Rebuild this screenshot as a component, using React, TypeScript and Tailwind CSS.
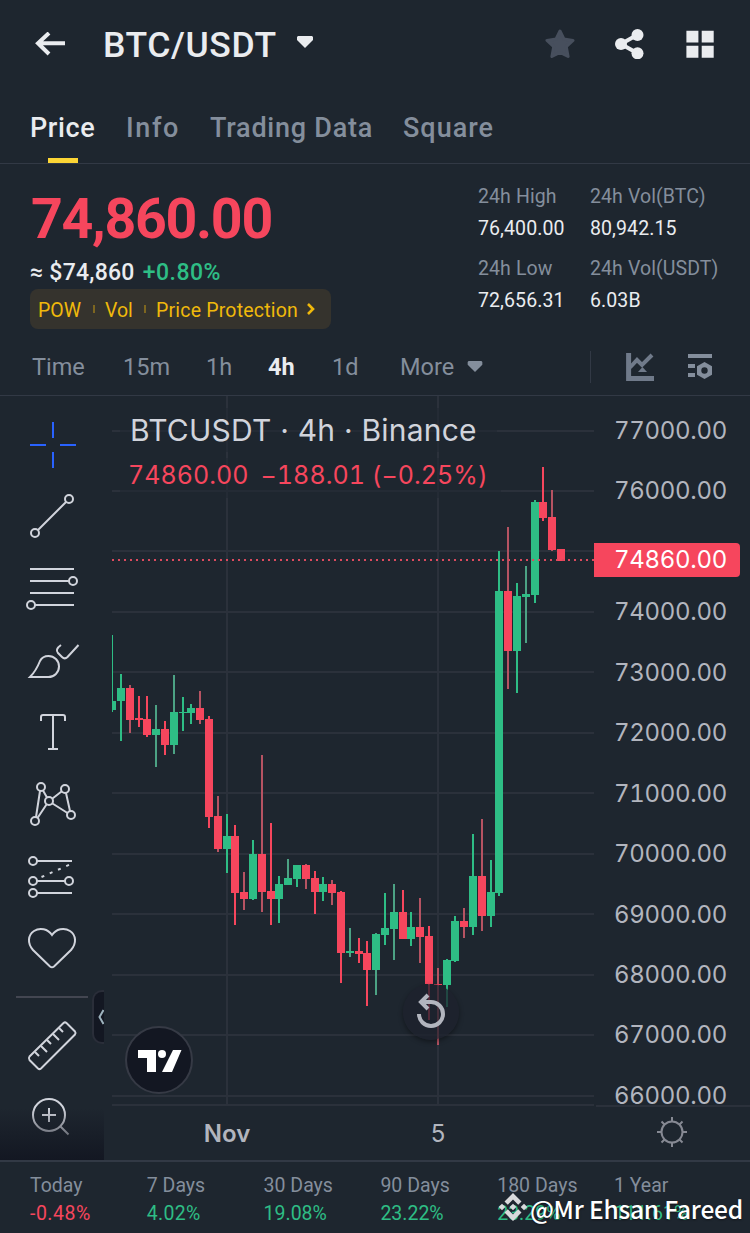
import React from 'react';

type Candle = [x: number, open: number, close: number, high: number, low: number, up: 0 | 1];

// x centre, body top, body bottom, wick top, wick bottom, rising
const candles: Candle[] = [
  [112, 701, 710, 635, 712, 1],
  [121, 688, 701, 674, 741, 1],
  [130, 688, 720, 685, 733, 0],
  [139, 718, 720, 696, 727, 0],
  [147, 719, 735, 696, 737, 0],
  [156, 729, 735, 705, 767, 1],
  [165, 729, 745, 721, 755, 0],
  [174, 712, 745, 675, 754, 1],
  [183, 712, 713, 697, 731, 1],
  [191, 708, 713, 704, 724, 1],
  [200, 708, 720, 691, 724, 0],
  [209, 719, 817, 716, 828, 0],
  [218, 816, 849, 796, 852, 0],
  [227, 836, 849, 814, 873, 1],
  [235, 836, 893, 825, 925, 0],
  [244, 892, 899, 872, 910, 0],
  [253, 854, 899, 840, 900, 1],
  [262, 854, 892, 755, 912, 0],
  [271, 891, 899, 823, 925, 0],
  [279, 884, 899, 876, 923, 1],
  [288, 878, 885, 859, 885, 1],
  [297, 865, 879, 865, 887, 1],
  [306, 865, 879, 864, 889, 0],
  [315, 878, 892, 871, 914, 0],
  [323, 884, 892, 877, 901, 1],
  [332, 884, 893, 880, 905, 0],
  [341, 892, 953, 891, 983, 0],
  [350, 951, 953, 928, 957, 1],
  [359, 951, 954, 938, 963, 0],
  [367, 953, 970, 941, 1006, 0],
  [376, 934, 970, 933, 995, 1],
  [385, 928, 935, 893, 945, 1],
  [394, 912, 929, 884, 960, 1],
  [403, 912, 939, 890, 939, 0],
  [411, 927, 939, 912, 946, 1],
  [420, 927, 937, 898, 963, 0],
  [429, 936, 984, 926, 1020, 0],
  [438, 984, 985, 968, 1045, 0],
  [447, 960, 985, 959, 1007, 1],
  [455, 921, 961, 916, 962, 1],
  [464, 921, 927, 908, 938, 0],
  [473, 876, 927, 834, 935, 1],
  [482, 876, 916, 819, 931, 0],
  [491, 892, 916, 860, 927, 1],
  [499, 591, 893, 551, 896, 1],
  [508, 591, 651, 527, 689, 0],
  [517, 596, 651, 583, 693, 1],
  [526, 594, 597, 566, 643, 1],
  [535, 502, 595, 500, 603, 1],
  [543, 502, 518, 467, 521, 0],
  [552, 517, 550, 490, 551, 0],
  [561, 549, 561, 549, 561, 0],
];

const gridY = [431, 491, 551, 612, 672, 733, 793, 854, 914, 975, 1035, 1096];

const priceLabels = [
  '77000.00', '76000.00', '', '74000.00', '73000.00', '72000.00',
  '71000.00', '70000.00', '69000.00', '68000.00', '67000.00', '66000.00',
];

const Header: React.FC = () => (
  <header className="flex h-[88px] items-center pl-[35px] pr-9 text-[#eaecef]">
    <svg className="h-6 w-[30px]" viewBox="0 0 30 24" fill="none" stroke="currentColor" strokeWidth="4">
      <path d="M30 11.3H4M14 1L3 11.3 14 22" />
    </svg>
    <h1 className="ml-[38px] w-[194px] pt-0.5 text-[35.5px] leading-[40px] font-medium tracking-[0.6px]">BTC/USDT</h1>
    <svg className="-mt-1 h-3 w-4" viewBox="0 0 16 12" fill="currentColor">
      <path d="M1 0h14l1 1v3L8 12 0 4V1z" />
    </svg>
    <div className="ml-auto flex items-center">
      <svg className="h-[30px] w-[30px] text-[#474f5d]" viewBox="0 0 30 30" fill="currentColor" stroke="currentColor" strokeWidth="3" strokeLinejoin="round">
        <path d="M15 2l3.9 8 9.1 1.400-6.700 6.300 1.800 9.800L15 23.400l-8.100 4.100 1.800-9.800L2 11.400 11.100 10z" />
      </svg>
      <svg className="ml-10 h-[30px] w-[30px]" viewBox="0 0 30 30" fill="currentColor">
        <path d="M22 6L6 15l16 9" fill="none" stroke="currentColor" strokeWidth="4" />
        <circle cx="6" cy="15" r="6" />
        <circle cx="22.5" cy="6" r="6" />
        <circle cx="22.5" cy="24.3" r="6" />
      </svg>
      <svg className="ml-[41px] h-7 w-7" viewBox="0 0 28 28" fill="currentColor">
        <path d="M.4.7h12v11.7H.4zM15.7.7h12v11.7h-12zM.4 15.7h12v12H.4zM15.7 15.7h12v12h-12z" />
      </svg>
    </div>
  </header>
);

const Tabs: React.FC = () => (
  <nav className="flex h-[76px] border-b border-[#323945] pl-[30px] text-[27px] font-medium text-[#848e9c]">
    <div className="flex w-24 flex-col">
      <span className="h-[70px] pt-5 leading-[40px] tracking-[0.6px] text-[#eaecef]">Price</span>
      <span className="ml-[18px] h-[5px] w-[30px] bg-[#fcd535]" />
    </div>
    <span className="w-[84px] pt-5 leading-[40px] tracking-[1.6px]">Info</span>
    <span className="w-[193px] pt-5 leading-[40px] tracking-[0.75px]">Trading Data</span>
    <span className="pt-5 leading-[40px] tracking-[1px]">Square</span>
  </nav>
);

const Stat: React.FC<{ label: string; value: string }> = ({ label, value }) => (
  <div className="text-[19.5px] leading-8 tracking-[0.1px]">
    <div className="text-[#848e9c]">{label}</div>
    <div className="text-[#eaecef]">{value}</div>
  </div>
);

const Ticker: React.FC = () => (
  <section className="flex h-[174px]">
    <div className="w-[478px] pl-[30px]">
      <div className="mt-[27px] ml-px h-[58px] text-[55.5px] leading-[58px] font-bold tracking-[-1.3px] text-[#f6465d]">74,860.00</div>
      <div className="mt-[9px] flex h-7 items-center gap-2 pt-0.5 text-[23px] font-medium">
        <span className="tracking-[0.25px] text-[#eaecef]">≈ $74,860</span>
        <span className="tracking-[0.5px] text-[#2ebd85]">+0.80%</span>
      </div>
      <div className="mt-[3px] flex h-10 w-[301px] items-center rounded-lg bg-[#35332d] pl-2 text-[19.5px] text-[#f0b90b]">
        <span className="w-[55px] pt-1">POW</span>
        <span className="mr-[10px] h-2 w-0.5 bg-[#7d6620]" />
        <span className="w-[39px] pt-1">Vol</span>
        <span className="mr-[10px] h-2 w-0.5 bg-[#7d6620]" />
        <span className="w-[151px] pt-1 tracking-[0.2px]">Price Protection</span>
        <svg className="h-3 w-2" viewBox="0 0 8 12" fill="none" stroke="currentColor" strokeWidth="2.6">
          <path d="M1 1l5 5-5 5" />
        </svg>
      </div>
    </div>
    <div className="grid grid-cols-[112px_auto] grid-rows-[72px_72px] pt-[17px]">
      <Stat label="24h High" value="76,400.00" />
      <Stat label="24h Vol(BTC)" value="80,942.15" />
      <Stat label="24h Low" value="72,656.31" />
      <Stat label="24h Vol(USDT)" value="6.03B" />
    </div>
  </section>
);

const Intervals: React.FC = () => (
  <section className="flex h-[58px] items-center border-b border-[#323945] pl-8 text-[23.5px] text-[#848e9c]">
    <span className="w-[91px] pt-0.5">Time</span>
    <span className="w-[83px] pt-0.5">15m</span>
    <span className="w-[62px] pt-0.5">1h</span>
    <span className="w-16 pt-0.5 font-bold text-[#eaecef]">4h</span>
    <span className="w-[68px] pt-0.5">1d</span>
    <span className="w-[67px] pt-0.5">More</span>
    <svg className="h-[11px] w-4" viewBox="0 0 16 12" fill="currentColor">
      <path d="M1 0h14l1 1v3L8 12 0 4V1z" />
    </svg>
    <span className="ml-[107px] h-8 w-px bg-[#323945]" />
    <svg className="ml-[35px] h-7 w-7 text-[#707a8a]" viewBox="0 0 28 28" fill="none" stroke="currentColor">
      <path d="M2.6 0v25.4H28" strokeWidth="5" />
      <path d="M4 14.5l7-7.5 5 5L26 2" strokeWidth="4" />
      <path d="M12 19l4.5-5 4.5 5z" fill="currentColor" stroke="none" />
    </svg>
    <svg className="ml-[34px] h-[27px] w-6" viewBox="0 0 24 27" fill="currentColor">
      <path d="M0 1h24v4H0zM0 11h7v4H0zM0 20h7v4H0z" />
      <path fillRule="evenodd" d="M16.5 9l7.5 4.3v8.4L16.5 26 9 21.700v-8.400zM16.500 14.300a3.200 3.200 0 1 0 0 6.400 3.200 3.200 0 1 0 0-6.400z" />
    </svg>
  </section>
);

const Tool: React.FC<{ children: React.ReactNode; className?: string }> = ({ children, className }) => (
  <svg
    className={className || 'h-[72px] w-[104px] shrink-0 text-[#d1d4dc]'}
    viewBox="0 0 104 72"
    fill="none"
    stroke="currentColor"
    strokeWidth="2"
  >
    {children}
  </svg>
);

const Toolbar: React.FC = () => (
  <aside className="relative flex w-[112px] flex-col pt-[13px]">
    <Tool className="h-[72px] w-[104px] shrink-0 text-[#2962ff]">
      <path d="M53 13v16M53 43v16M30 36h16M60 36h16" />
    </Tool>
    <Tool>
      <circle cx="69" cy="18" r="4" />
      <circle cx="35" cy="52" r="4" />
      <path d="M38 49l28-28" />
    </Tool>
    <Tool>
      <path d="M30 16h44M30 28h39M30 40h44M35 52h39" />
      <circle cx="73" cy="28" r="4" />
      <circle cx="31" cy="52" r="4" />
    </Tool>
    <Tool>
      <path d="M30 52c5-5 8-11 10-16 1.800-3.500 4.800-5 8.500-5a10.500 10.500 0 0 1 0 21z" />
      <path d="M61 20c-4.500 3-5 6-3 8l4 4c2 2 4 1.500 5.500 0l11-12" />
    </Tool>
    <Tool>
      <path d="M41 24v-4q0-2 2-2h20q2 0 2 2v4M53 18v34M48 52h10" />
    </Tool>
    <Tool>
      <circle cx="41" cy="18" r="4" />
      <circle cx="65" cy="20" r="4" />
      <circle cx="49" cy="32" r="4" />
      <circle cx="35" cy="52" r="4" />
      <circle cx="71" cy="46" r="4" />
      <path d="M40 22l-4 26M43 21.500l4 7M52.500 29.500l9-7M66 24l4 18M46.500 35.500L37.500 49M52.500 34.500l15 9.500" />
    </Tool>
    <Tool>
      <circle cx="33" cy="20" r="4" />
      <circle cx="33" cy="40" r="4" />
      <circle cx="69" cy="40" r="4" />
      <circle cx="33" cy="52" r="4" />
      <path d="M37 20h35M37 40h28M37 52h35" />
      <path d="M41.500 36L70 23.500" strokeDasharray="3 6" />
    </Tool>
    <Tool>
      <path d="M52 22c-4-6-12-8-18-4-6 4-7 12-1 19l17 16.500q2 1.500 4 0l17-16.500c6-7 5-15-1-19-6-4-14-2-18 4z" />
    </Tool>
    <div className="mb-3 ml-4 mt-[11px] h-0.5 w-[72px] bg-[#434651]" />
    <Tool>
      <path d="M29.500 46.500L63.500 13q1.500-1.200 3 0l8.500 8.500q1.200 1.500 0 3L41 58.500q-1.500 1.200-3 0l-8.500-8.500q-1.300-1.700 0-3.500z" />
      <path d="M35 42l4 4M41 36l6 6M47 30l4 4M53 24l6 6M59 18l4 4" />
    </Tool>
    <Tool>
      <circle cx="49" cy="33" r="16" />
      <path d="M49 26v14M42 33h14M60.500 44.500l8 8" />
    </Tool>
    <div className="absolute bottom-0 left-0 h-[52px] w-[104px] bg-gradient-to-b from-transparent to-[#131722]" />
    <div className="absolute left-[92px] top-[594px] flex h-[54px] w-3 items-center rounded-l-[10px] border-2 border-r-0 border-[#2a2e39] bg-[#131722] pl-1">
      <svg className="h-4 w-1.5" viewBox="0 0 6 16" fill="none" stroke="#9db2bd" strokeWidth="2">
        <path d="M5.500 1L1.500 8l4 7" />
      </svg>
    </div>
  </aside>
);

const Chart: React.FC = () => (
  <div className="relative h-[764px] w-[482px] shrink-0">
    <svg className="block h-[764px] w-[482px]" viewBox="112 396 482 764">
      <g fill="#2b313b">
        {gridY.map((y) => (
          <rect key={y} x="112" y={y - 1} width="482" height="2" />
        ))}
        <rect x="226" y="396" width="2" height="709" />
        <rect x="437" y="396" width="2" height="709" />
        <rect x="112" y="1104" width="482" height="2" />
      </g>
      {candles.map(([x, top, bottom, high, low, up], i) => {
        const soft = i % 5 === 0 || i % 5 === 2;
        const body = up ? '#2ebd85' : '#f6465d';
        const wick = soft && i > 0 ? (up ? '#4ca284' : '#b65362') : body;
        return (
          <g key={x}>
            <rect x={x - 1} y={high} width="2" height={low - high} fill={wick} />
            <rect x={x - 4} y={top} width="8" height={bottom - top} fill={body} />
          </g>
        );
      })}
      <path d="M112 560h482" stroke="#dc4a5e" strokeWidth="2" strokeDasharray="2 4" />
    </svg>

    {/* Legend */}
    <div className="absolute left-2 top-3 text-[#d1d4dc]">
      <div className="h-11 w-[377px] bg-[#1e262f]/50 pl-[10px] text-[30px] leading-[44px] tracking-[0.22px] whitespace-nowrap">
        BTCUSDT · 4h · Binance
      </div>
      <div className="mt-1.5 flex h-10 w-[381px] gap-[12px] bg-[#1e262f]/50 pl-2 text-[25px] leading-[34px] tracking-[0.05px] whitespace-nowrap text-[#f6465d] tabular-nums">
        <span>74860.00</span>
        <span>−188.01 (−0.25%)</span>
      </div>
    </div>

    <div className="absolute left-[13px] top-[630px] h-[68px] w-[68px] rounded-full border-2 border-[#363a45] bg-[#131722]">
      <svg className="h-16 w-16" viewBox="127 1028 64 64" fill="#fff">
        <path d="M138 1050h18v22h-9v-14h-9zM173 1050h8.500l-9.500 22h-10z" />
        <circle cx="162" cy="1054" r="4" />
      </svg>
    </div>

    <div className="absolute left-[291px] top-[588px] h-14 w-14 rounded-full bg-[#1e222d]/75 shadow-[0_2px_5px_rgba(0,0,0,0.4)]">
      <svg className="h-14 w-14" viewBox="403 984 56 56" fill="none" stroke="#b2b5be" strokeWidth="4">
        <path d="M419 1014a12 12 0 1 0 12-12h-8M428 995l-7 7 7 7" />
      </svg>
    </div>

    {/* Time axis */}
    <span className="absolute bottom-3 left-[115px] w-0 text-[24px] leading-7 font-semibold text-[#b2b5be]">
      <span className="flex w-0 justify-center">Nov</span>
    </span>
    <span className="absolute bottom-3 left-[326px] text-[24px] leading-7 text-[#b2b5be]">
      <span className="flex w-0 justify-center">5</span>
    </span>
  </div>
);

const PriceAxis: React.FC = () => (
  <div className="relative w-[156px] tracking-[-0.3px] tabular-nums">
    <div className="h-[709px] pt-[5px]">
      {priceLabels.map((label, i) => (
        <div key={i} className="h-[60.45px] pl-5 text-[24px] leading-[60.45px] text-[#b2b5be]">
          {label}
        </div>
      ))}
    </div>
    <div className="ml-0.5 h-0.5 bg-[#2b313b]" />
    <svg className="ml-[62px] mt-[9px] h-8 w-8" viewBox="0 0 32 32" fill="none" stroke="#868993" strokeWidth="2">
      <circle cx="16" cy="16" r="10.500" />
      <path d="M16 1v5M16 26v5M1 16h5M26 16h5M5.500 5.500l3 3M23.500 23.500l3 3M26.500 5.500l-3 3M8.500 23.500l-3 3" />
    </svg>
    <div className="absolute left-0 top-[147px] h-[34px] w-[146px] rounded-r-[4px] bg-[#f6465d] pl-5 text-[24px] leading-[34px] text-white">
      74860.00
    </div>
  </div>
);

const periods = [
  { label: 'Today', value: '-0.48%', color: 'text-[#f6465d] tracking-[0.5px]' },
  { label: '7 Days', value: '4.02%', color: 'text-[#2ebd85] tracking-[0.3px]' },
  { label: '30 Days', value: '19.08%', color: 'text-[#2ebd85]' },
  { label: '90 Days', value: '23.22%', color: 'text-[#2ebd85]' },
  { label: '180 Days', value: '23.29%', color: 'text-[#2ebd85]' },
  { label: '1 Year', value: '111.61%', color: 'text-[#2ebd85]' },
];

const Performance: React.FC = () => (
  <footer className="relative flex h-[73px] border-t-2 border-[#323945] pl-[30px] pt-[10px] text-[19.5px] leading-7">
    {periods.map((p) => (
      <div key={p.label} className="w-[116.800px] shrink-0">
        <div className="text-[#848e9c]">{p.label}</div>
        <div className={p.color}>{p.value}</div>
      </div>
    ))}
    <div className="absolute left-[498px] top-[30px] flex items-center whitespace-nowrap text-white">
      <svg className="h-[30px] w-[30px]" viewBox="0 0 30 30" fill="#d9dadc">
        <path d="M15 1l8.500 8.500-3.300 3.300L15 7.600l-5.200 5.200-3.300-3.300zM15 29l-8.500-8.500 3.300-3.300 5.200 5.200 5.200-5.200 3.300 3.300zM4 11.700L7.300 15 4 18.300.7 15zM26 11.700l3.300 3.300-3.300 3.300-3.300-3.300zM15 11.700l3.300 3.300-3.300 3.300-3.300-3.300z" />
      </svg>
      <span className="mt-0.5 -mb-0.5 ml-0.5 font-['Noto_Sans_CJK_SC','Noto_Sans',sans-serif] text-[24.5px] leading-[30px] font-medium tracking-[-0.2px] [text-shadow:0_1px_2px_rgba(0,0,0,0.5)]">
        @Mr Ehsan Fareed
      </span>
    </div>
  </footer>
);

const App: React.FC = () => {
  return (
    <div className="h-[1233px] w-[750px] overflow-hidden bg-[#1e262f] font-[Roboto,sans-serif]">
      <Header />
      <Tabs />
      <Ticker />
      <Intervals />
      <main className="flex h-[764px] font-[Inter,sans-serif]">
        <Toolbar />
        <Chart />
        <PriceAxis />
      </main>
      <Performance />
    </div>
  );
};

export default App;
